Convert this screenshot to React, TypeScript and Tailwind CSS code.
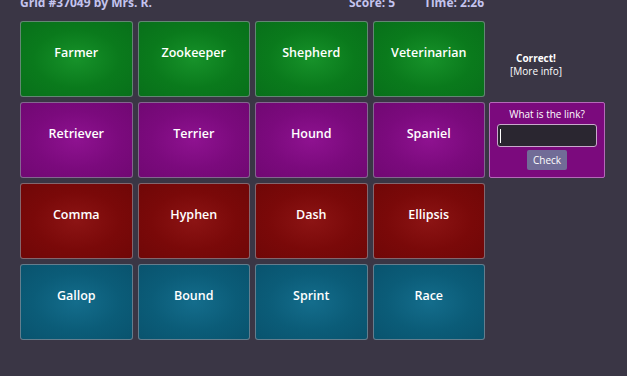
const rows = [
  { color: 'green', words: ['Farmer', 'Zookeeper', 'Shepherd', 'Veterinarian'] },
  { color: 'purple', words: ['Retriever', 'Terrier', 'Hound', 'Spaniel'] },
  { color: 'red', words: ['Comma', 'Hyphen', 'Dash', 'Ellipsis'] },
  { color: 'teal', words: ['Gallop', 'Bound', 'Sprint', 'Race'] },
];

const tileClass: Record<string, string> = {
  green: 'bg-[radial-gradient(ellipse_at_center,#17922a_0%,#0a7a1c_55%,#08701a_100%)]',
  purple: 'bg-[radial-gradient(ellipse_at_center,#8e1290_0%,#7b0a7d_55%,#710873_100%)]',
  red: 'bg-[radial-gradient(ellipse_at_center,#8c1414_0%,#7a0909_55%,#700707_100%)]',
  teal: 'bg-[radial-gradient(ellipse_at_center,#146d8c_0%,#0b5c78_55%,#09536e_100%)]',
};

function Tile({ word, color }: { word: string; color: string }) {
  return (
    <div
      className={`h-[76px] rounded-[3px] border border-[#8a8f9a]/70 flex items-center justify-center pb-[12px] text-white text-[12.5px] font-semibold ${tileClass[color]}`}
    >
      {word}
    </div>
  );
}

export default function App() {
  return (
    <div
      className="w-[627px] h-[376px] bg-[#3a3645] overflow-hidden relative"
      style={{ fontFamily: '"Open Sans", "Noto Sans", sans-serif' }}
    >
      <div className="h-[21px] relative text-[12px] font-bold text-[#c4c4ee]">
        <span className="absolute left-[20px] top-[-6px]">Grid #37049 by Mrs. R.</span>
        <span className="absolute left-[349px] top-[-6px]">Score: 5</span>
        <span className="absolute left-[424px] top-[-6px]">Time: 2:26</span>
      </div>
      <div className="flex pl-[20px] gap-[4px]">
        <div className="grid grid-cols-4 gap-[5px] w-[465px]">
          {rows.map((r) => r.words.map((w) => <Tile key={w} word={w} color={r.color} />))}
        </div>
        <div className="w-[116px] flex flex-col">
          <div className="h-[81px] flex flex-col items-center pt-[31px] pr-[22px] text-white text-[10px] leading-[13px]">
            <span className="font-bold">Correct!</span>
            <span>[More info]</span>
          </div>
          <div className="h-[76px] bg-[#7b0a7d] border border-[#b46ab8] rounded-[2px] flex flex-col items-center pt-[4px]">
            <span className="text-white text-[10px] leading-[14px]">What is the link?</span>
            <div className="mt-[3px] w-[100px] h-[23px] bg-[#2a2630] border border-[#c9a8cc] rounded-[3px] flex items-center pl-[2px]">
              <div className="w-px h-[14px] bg-white" />
            </div>
            <div className="mt-[3px] w-[40px] h-[20px] bg-[#716c97] rounded-[2px] flex items-center justify-center text-white text-[10px]">
              Check
            </div>
          </div>
        </div>
      </div>
    </div>
  );
}
